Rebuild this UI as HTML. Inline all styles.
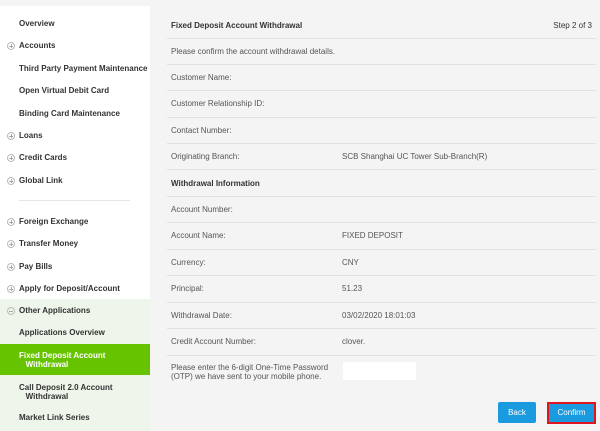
<!DOCTYPE html>
<html><head><style>
*{margin:0;padding:0;box-sizing:border-box}
body{width:600px;height:431px;background:#f4f4f4;font-family:"Liberation Sans",Arial,sans-serif;position:relative;overflow:hidden;color:#333}
#side{position:absolute;left:0;top:6px;width:150px;height:425px;background:#fff}
.it{position:absolute;left:19px;font-size:8px;font-weight:bold;color:#333;line-height:9px}
.pl{position:absolute;left:7px;width:8px;height:8px;border:1px solid #bbb;border-radius:50%}
.pl::before{content:"";position:absolute;left:1px;top:2.5px;width:4px;height:1px;background:#aaa}
.pl.p::after{content:"";position:absolute;left:2.5px;top:1px;width:1px;height:4px;background:#aaa}
#green{position:absolute;left:0;top:299px;width:150px;height:132px;background:#eef5ea}
#sel{position:absolute;left:0;top:344px;width:150px;height:31px;background:#66c300}
.lab{position:absolute;left:171px;font-size:8px;color:#555}
.val{position:absolute;left:342px;font-size:8px;color:#555}
.ln{position:absolute;left:167px;width:429px;height:1px;background:#e2e2e2}
</style></head><body>
<div id="side"></div>
<div id="green"></div>
<div id="sel"></div>
<div class="it" style="top:19px">Overview</div>
<div class="pl p" style="top:42px"></div><div class="it" style="top:41px">Accounts</div>
<div class="it" style="top:64px">Third Party Payment Maintenance</div>
<div class="it" style="top:86px">Open Virtual Debit Card</div>
<div class="it" style="top:109px">Binding Card Maintenance</div>
<div class="pl p" style="top:132px"></div><div class="it" style="top:131px">Loans</div>
<div class="pl p" style="top:154px"></div><div class="it" style="top:153px">Credit Cards</div>
<div class="pl p" style="top:177px"></div><div class="it" style="top:176px">Global Link</div>
<div style="position:absolute;left:19px;top:200px;width:111px;height:1px;background:#e6e6e6"></div>
<div class="pl p" style="top:218px"></div><div class="it" style="top:217px">Foreign Exchange</div>
<div class="pl p" style="top:240px"></div><div class="it" style="top:239px">Transfer Money</div>
<div class="pl p" style="top:263px"></div><div class="it" style="top:262px">Pay Bills</div>
<div class="pl p" style="top:285px"></div><div class="it" style="top:284px">Apply for Deposit/Account</div>
<div class="pl" style="top:307px"></div><div class="it" style="top:306px">Other Applications</div>
<div class="it" style="top:328px">Applications Overview</div>
<div class="it" style="top:351px;color:#fff">Fixed Deposit Account<br>&nbsp;&nbsp;&nbsp;Withdrawal</div>
<div class="it" style="top:383px">Call Deposit 2.0 Account<br>&nbsp;&nbsp;&nbsp;Withdrawal</div>
<div class="it" style="top:413px">Market Link Series</div>

<div class="lab" style="top:21px;font-weight:bold;color:#333">Fixed Deposit Account Withdrawal</div>
<div style="position:absolute;right:8px;top:21px;font-size:8px;color:#333">Step 2 of 3</div>
<div class="ln" style="top:38px"></div>
<div class="lab" style="top:47px">Please confirm the account withdrawal details.</div>
<div class="ln" style="top:64px"></div>
<div class="lab" style="top:73px">Customer Name:</div>
<div class="ln" style="top:90px"></div>
<div class="lab" style="top:99px">Customer Relationship ID:</div>
<div class="ln" style="top:117px"></div>
<div class="lab" style="top:126px">Contact Number:</div>
<div class="ln" style="top:143px"></div>
<div class="lab" style="top:152px">Originating Branch:</div><div class="val" style="top:152px">SCB Shanghai UC Tower Sub-Branch(R)</div>
<div class="ln" style="top:169px"></div>
<div class="lab" style="top:179px;font-weight:bold;color:#333">Withdrawal Information</div>
<div class="ln" style="top:196px"></div>
<div class="lab" style="top:205px">Account Number:</div>
<div class="ln" style="top:222px"></div>
<div class="lab" style="top:231px">Account Name:</div><div class="val" style="top:231px">FIXED DEPOSIT</div>
<div class="ln" style="top:249px"></div>
<div class="lab" style="top:258px">Currency:</div><div class="val" style="top:258px">CNY</div>
<div class="ln" style="top:275px"></div>
<div class="lab" style="top:284px">Principal:</div><div class="val" style="top:284px">51.23</div>
<div class="ln" style="top:302px"></div>
<div class="lab" style="top:311px">Withdrawal Date:</div><div class="val" style="top:311px">03/02/2020 18:01:03</div>
<div class="ln" style="top:328px"></div>
<div class="lab" style="top:337px">Credit Account Number:</div><div class="val" style="top:337px">clover.</div>
<div class="ln" style="top:355px"></div>
<div class="lab" style="top:363px;line-height:9px">Please enter the 6-digit One-Time Password<br>(OTP) we have sent to your mobile phone.</div>
<div style="position:absolute;left:343px;top:362px;width:73px;height:18px;background:#fff"></div>
<div style="position:absolute;left:498px;top:402px;width:38px;height:21px;background:#1a9be0;border-radius:2px;color:#fff;font-size:8px;text-align:center;line-height:21px">Back</div>
<div style="position:absolute;left:547px;top:402px;width:49px;height:22px;background:#1a9be0;border:2px solid #e0161e;color:#fff;font-size:8px;text-align:center;line-height:18px">Confirm</div>
</body></html>
